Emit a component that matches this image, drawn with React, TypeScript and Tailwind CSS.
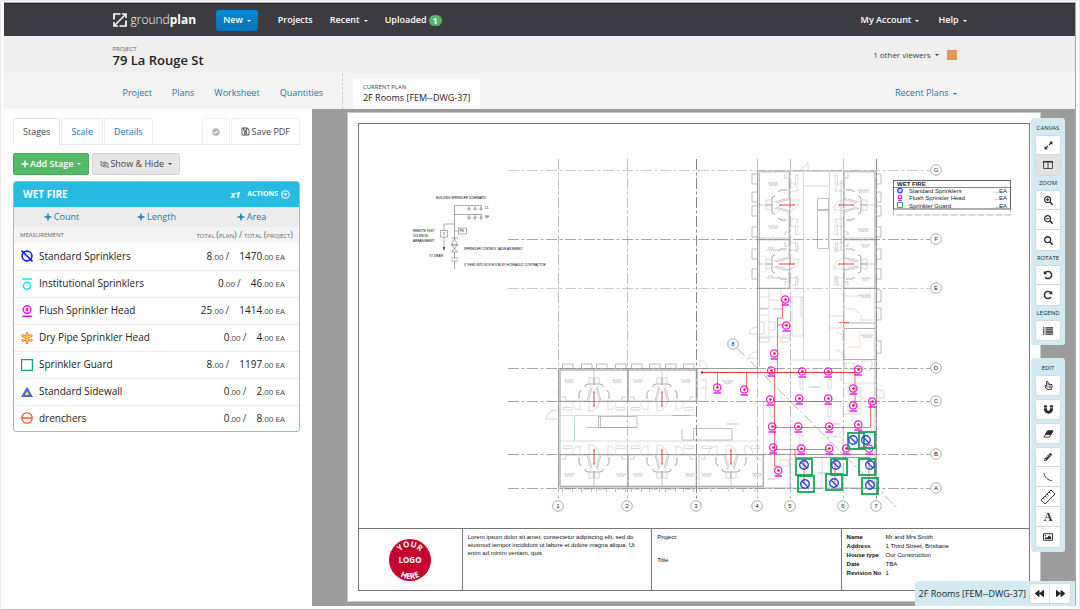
import type { ReactNode } from 'react'
import clsx from 'clsx'
import {
  FaBackward,
  FaCheckCircle,
  FaExpandAlt,
  FaForward,
  FaMagnet,
  FaPencilAlt,
  FaPlus,
  FaRegEyeSlash,
  FaRegHandPointer,
  FaRegImage,
  FaRegSave,
  FaSearch,
  FaSearchMinus,
  FaSearchPlus,
} from 'react-icons/fa'

type SymbolKind = 'standard' | 'institutional' | 'flush' | 'dry' | 'guard' | 'sidewall' | 'drencher'

type Measurement = { kind: SymbolKind; name: string; plan: number; project: number }

const measurements: Measurement[] = [
  { kind: 'standard', name: 'Standard Sprinklers', plan: 8, project: 1470 },
  { kind: 'institutional', name: 'Institutional Sprinklers', plan: 0, project: 46 },
  { kind: 'flush', name: 'Flush Sprinkler Head', plan: 25, project: 1414 },
  { kind: 'dry', name: 'Dry Pipe Sprinkler Head', plan: 0, project: 4 },
  { kind: 'guard', name: 'Sprinkler Guard', plan: 8, project: 1197 },
  { kind: 'sidewall', name: 'Standard Sidewall', plan: 0, project: 2 },
  { kind: 'drencher', name: 'drenchers', plan: 0, project: 8 },
]

const titleRows = [
  ['Name', 'Mr and Mrs Smith'],
  ['Address', '1 Third Street, Brisbane'],
  ['House type', 'Our Construction'],
  ['Date', 'TBA'],
  ['Revision No', '1'],
]

function Caret() {
  return <span aria-hidden className="ml-1 inline-block border-x-2 border-t-2 border-x-transparent align-middle" />
}

function LogoMark() {
  return (
    <svg viewBox="0 0 14 14" className="size-[14px]" fill="none" stroke="#fff" strokeWidth="1.7">
      <path d="M1 6.500V1h6.500M13 7.500V13H6.500" />
      <path d="M2 12 12 2" strokeWidth="1.5" />
      <path d="M9 1h4v4M1 9v4h4" strokeWidth="1.5" />
    </svg>
  )
}

/* ---------- measurement symbols, 12x12 ---------- */

function MeasureSymbol({ kind }: { kind: SymbolKind }) {
  return (
    <svg viewBox="0 0 12 12" className="size-3" fill="none">
      {kind === 'standard' && (
        <g stroke="#0b1ff0" strokeWidth="1.6">
          <circle cx="6" cy="6" r="4.9" />
          <path d="M.5.5l11 11" />
        </g>
      )}
      {kind === 'institutional' && (
        <g stroke="#12e6ee" strokeWidth="1.5">
          <circle cx="6" cy="7.7" r="3.5" />
          <path d="M1.2 1h9.6" />
        </g>
      )}
      {kind === 'flush' && (
        <g stroke="#f312ea" strokeWidth="1.5">
          <circle cx="6" cy="4.6" r="3.8" />
          <circle cx="6" cy="4.6" r=".8" />
          <path d="M1.2 11.2h9.6" />
        </g>
      )}
      {kind === 'dry' && (
        <g strokeLinecap="round">
          <path d="M6 1.500v9M2 3.700l8 4.600M10 3.700 2 8.300" stroke="#f2572f" strokeWidth="3" />
          <path d="M6 1.500v9M2 3.700l8 4.600M10 3.700 2 8.300" stroke="#fbe04a" strokeWidth="1.5" />
        </g>
      )}
      {kind === 'guard' && <rect x="0.6" y="0.6" width="10.8" height="10.8" stroke="#0aa27c" strokeWidth="1.2" />}
      {kind === 'sidewall' && (
        <>
          <path d="M6 .8 12 11H0z" fill="#4f63cf" />
          <path d="M6 5l2.2 4H3.8z" fill="#f0e85a" />
        </>
      )}
      {kind === 'drencher' && (
        <g stroke="#f4563c" strokeWidth="1.3">
          <circle cx="6" cy="6" r="5.2" />
          <path d="M1 6h10" />
        </g>
      )}
    </svg>
  )
}

/* ---------- toolbar drawings ---------- */

const UNDO =
  'M1664 896q0 156-61 298t-164 245-245 164-298 61q-172 0-327-72.5t-264-204.5q-7-10-6.5-22.5t8.5-20.5l137-138q10-9 25-9 16 2 23 12 73 95 179 147t225 52q104 0 198.5-40.5t163.5-109.5 109.5-163.5 40.5-198.5-40.5-198.5-109.5-163.5-163.5-109.5-198.5-40.5q-98 0-188 35.5t-160 101.5l137 138q31 30 14 69-17 40-59 40h-448q-26 0-45-19t-19-45v-448q0-42 40-59 39-17 69 14l130 129q107-101 244.5-156.5t284.5-55.5q156 0 298 61t245 164 164 245 61 298z'

function RotateIcon({ clockwise = false }: { clockwise?: boolean }) {
  return (
    <svg viewBox="0 0 1792 1792" className={clsx('size-[10px]', clockwise && '-scale-x-100')} fill="currentColor">
      <path d={UNDO} />
    </svg>
  )
}

function SplitIcon() {
  return (
    <svg viewBox="0 0 10 8" className="h-2 w-[10px]" fill="none" stroke="currentColor">
      <path d="M.5 1v6.500h9V1M5 1v6.500" strokeWidth=".8" />
      <path d="M0 .8h10" strokeWidth="1.500" />
    </svg>
  )
}

function LegendIcon() {
  return (
    <svg viewBox="0 0 10 8" className="h-2 w-[10px]" stroke="currentColor" strokeWidth="1.300">
      <path d="M0 .800h1.500M2.500 .800H10M0 2.900h1.500M2.500 2.900H10M0 5h1.500M2.500 5H10M0 7.100h1.500M2.500 7.100H10" />
    </svg>
  )
}

function EraserIcon() {
  return (
    <svg viewBox="0 0 12 9" className="h-2 w-[11px]" fill="none" stroke="currentColor" strokeWidth="1">
      <path d="M5 1h6L7 8H1z" />
      <path d="M5 1h6L8.700 5H2.700z" fill="currentColor" />
    </svg>
  )
}

function CurveIcon() {
  return (
    <svg viewBox="0 0 10 10" className="size-[10px]" fill="none" stroke="currentColor">
      <path d="M1 1c.4 4.200 4 7.300 8 7.800" strokeWidth=".9" />
    </svg>
  )
}

function RulerIcon() {
  return (
    <svg viewBox="0 0 16 16" className="size-4" fill="none" stroke="currentColor" strokeWidth=".9">
      <path d="M1 11 11 1l4 4L5 15z" />
      <path d="M3 9l1.500 1.500M5 7l1.500 1.500M7 5l1.500 1.500M9 3l1.500 1.500" />
    </svg>
  )
}

function ActionsIcon() {
  return (
    <svg viewBox="0 0 10 10" className="size-[9px]" fill="none" stroke="#fff" strokeWidth="1.3">
      <circle cx="5" cy="5" r="4.2" />
      <path d="M2.500 3.500h5L5 7.300z" fill="#fff" stroke="none" />
    </svg>
  )
}

type Tool = { label: string; icon: ReactNode; active?: boolean }

function ToolGroup({ tools }: { tools: Tool[] }) {
  return (
    <div className="flex w-[26px] flex-col divide-y divide-[#d6d6d6] overflow-hidden rounded-[3px] border border-[#d3dadc] bg-white">
      {tools.map(tool => (
        <button
          key={tool.label}
          type="button"
          aria-label={tool.label}
          className={clsx('flex h-5 items-center justify-center text-[#2b2b2b] first:h-[19px]', tool.active && 'bg-[#e2e2e2]')}
        >
          {tool.icon}
        </button>
      ))}
    </div>
  )
}

function ToolLabel({ children }: { children: ReactNode }) {
  return <div className="py-[3px] text-[6px] leading-[8px] text-[#222]">{children}</div>
}

/* ---------- floor plan ---------- */

const columns = [
  { x: 558, label: '1' },
  { x: 627, label: '2' },
  { x: 696, label: '3' },
  { x: 757, label: '4' },
  { x: 790, label: '5' },
  { x: 843, label: '6' },
  { x: 876, label: '7' },
]

const levels = [
  { y: 170, label: 'G' },
  { y: 239, label: 'F' },
  { y: 288, label: 'E' },
  { y: 368, label: 'D' },
  { y: 401, label: 'C' },
  { y: 454, label: 'B' },
  { y: 488, label: 'A' },
]

const flushHeads = [
  [785, 299], [786, 325], [774, 353], [717, 387], [744, 389], [771, 370], [802, 371], [828, 371], [858, 369],
  [770, 399], [799, 398], [828, 398], [853, 388], [853, 405], [872, 401], [772, 426], [798, 426], [829, 426],
  [858, 424], [773, 447], [801, 448], [829, 448], [846, 448], [869, 448], [778, 470],
]

const guards = [
  [848, 433], [859, 432], [796, 459], [831, 459], [859, 459], [798, 476], [826, 474], [862, 478],
]

const standardHeads = [
  [853, 440], [866, 440], [804, 465], [836, 465], [870, 465], [805, 484], [834, 483], [870, 485],
]

const windowsX = [562, 581, 596, 615, 631, 649, 665, 683]
const windowsY = [174, 192, 206, 227, 249, 269]

function GridBubble({ x, y, label }: { x: number; y: number; label: string }) {
  return (
    <g>
      <circle cx={x} cy={y} r="5.3" fill="#fff" stroke="#777" strokeWidth=".6" />
      <text x={x} y={y + 2} textAnchor="middle" fontSize="6" fill="#222">
        {label}
      </text>
    </g>
  )
}

// Two mirrored rooms sharing a wall; origin is the corridor wall, y grows into the rooms.
function RoomPair({ transform, half = 34 }: { transform: string; half?: number }) {
  return (
    <g transform={transform} fill="none">
      <g stroke="#999" strokeWidth=".5">
        <path d={`M${-half} 1H-8M8 1H${half}V32H${-half}V1`} />
        <path d="M-7 1-3 16M-5.500 1-2 14M7 1 3 16M5.500 1 2 14M0 17V32" />
        <path d="M-9 15q0 3 3 3H6q3 0 3-3" strokeWidth=".9" />
        <path d="M-5 19v5H-.6V19M5 19v5H.6V19" strokeWidth=".4" />
        <path d="M-15 3v6l2 3M15 3v6l-2 3" strokeWidth=".9" />
        <path d={`M${2 - half} 5h4V2M${half - 2} 5h-4V2`} />
      </g>
      <g stroke="#a8a8a8" strokeWidth=".4">
        <path d="M-5 0V-9A9 9 0 0 1 5 0" />
        <path d="M-14 0V-8A8 8 0 0 0-22 0M14 0V-8A8 8 0 0 1 22 0" />
        <path d={`M${-half + 3}-8h9v2.500h-9zM${half - 12}-8h9v2.500h-9z`} />
      </g>
      <path d="M0-4V10" stroke="#ef2b36" strokeWidth=".9" />
      <path d="M-1-4h2M-1 10h2" stroke="#ef2b36" strokeWidth=".8" />
    </g>
  )
}

function Schematic() {
  return (
    <g>
      <g fill="#000" fontSize="3">
        <text x="436" y="199">BUILDING SPRINKLER SCHEMATIC</text>
        <text x="485" y="209">L1</text>
        <text x="485" y="218">GF</text>
        <text x="413" y="232">REMOTE TEST</text>
        <text x="413" y="237">SOLENOID</text>
        <text x="413" y="242">ARRANGMENT</text>
        <text x="429" y="257">TO DRAIN</text>
        <text x="464" y="250">SPRINKLER CONTROL VALVE ASSEMBLY</text>
        <text x="464" y="266">4" FEED INTO SOV ROOM BY HYDRAULIC CONTRACTOR</text>
        <text x="443" y="235">S</text>
        <text x="460" y="232">FS</text>
      </g>
      <g fill="none" stroke="#555" strokeWidth=".5">
        <path d="M454.500 238V205.500H482M454.500 214.500H482" />
        <path d="M454.500 224H444v6M444 237v13" />
        <path d="M440.500 230.500h7v6.500h-7zM458.500 228h8v6h-8zM454.500 231h4" />
        <path d="M451.500 238h6.500M454.500 238l-3 7h6zM451.500 245l6 7h-6l6-7zM454.500 252v6M451 258h7M451 261h7M454.500 261v8" />
        {[469, 475, 481].map(x => (
          <path key={x} d={`M${x} 206v2m-1 0h2v2h-2zM${x} 215v2m-1 0h2v2h-2z`} />
        ))}
      </g>
      <path d="M443 247h2l-1 4z" fill="#333" />
    </g>
  )
}

function PlanLegend() {
  return (
    <g>
      <path d="M893.500 209v6h117v-6" fill="none" stroke="#999" strokeWidth=".7" strokeDasharray="7 2" />
      <rect x="893.500" y="180.500" width="117" height="28.500" fill="#fff" stroke="#555" strokeWidth=".9" />
      <path d="M893.500 187.500h117" stroke="#555" strokeWidth=".7" />
      <g fontSize="6" fill="#222">
        <text x="897" y="186" fontWeight="bold">WET FIRE</text>
        <text x="909" y="193">Standard Sprinklers</text>
        <text x="909" y="200">Flush Sprinkler Head</text>
        <text x="909" y="208">Sprinkler Guard</text>
        <text x="1007" y="193" textAnchor="end">...EA</text>
        <text x="1007" y="200" textAnchor="end">...EA</text>
        <text x="1007" y="208" textAnchor="end">...EA</text>
      </g>
      <g fill="none">
        <circle cx="900" cy="190.500" r="2.300" stroke="#1f3df0" strokeWidth="1.100" />
        <path d="M898 188.500l4 4" stroke="#1f3df0" strokeWidth=".8" />
        <circle cx="900" cy="197" r="1.900" stroke="#f01be4" strokeWidth="1.200" />
        <path d="M898 200.500h4" stroke="#f01be4" />
        <rect x="897.500" y="202.500" width="5" height="5" stroke="#14a884" strokeWidth=".9" />
      </g>
    </g>
  )
}

function FloorPlan() {
  return (
    <svg
      viewBox="359 124 670 404"
      role="img"
      aria-label="2F Rooms floor plan"
      className="block w-full font-['Liberation_Sans',sans-serif]"
    >
      {/* grid */}
      <g stroke="#8b8b8b" strokeWidth=".7" strokeDasharray="11 2.500 3 2.500">
        {levels.map(({ y, label }) => (
          <path key={label} d={`M508 ${y}.5H930`} stroke={y > 360 || y === 239 ? '#808080' : '#b5b5b5'} />
        ))}
        {columns.map(({ x, label }) => (
          <path key={label} d={`M${x}.5 159V500`} stroke={label === '3' || label === '7' ? '#555' : '#a5a5a5'} />
        ))}
        <path d="M737 348 897 508" strokeWidth=".6" />
      </g>

      {/* outer walls */}
      <g fill="none" stroke="#8f8f8f" strokeWidth=".7">
        <path d="M757.500 368V171h119V488H558.500V368.500H757M560 370H696M560 486.500H763M560 370v116" />
        <path d="M559.500 401.500H697V369M559.500 454.500H876M790 455V488M763.500 455v32M696.500 455v32M628 455v32M628 370v31" />
        <path d="M759.500 173V366M789.500 172V288M844 172V368M875 172V486" strokeWidth=".6" />
        <path d="M757.500 239.500h32M757.500 288.500h32M844 239.500h32M844 288.500h32M844 323h32M844 328.500h32M844 359.500h32" />
      </g>

      {/* windows */}
      <g fill="none" stroke="#8d8d8d" strokeWidth=".6">
        {windowsX.map(x => (
          <path key={x} d={`M${x}.5 368v-4h10.500v4M${x}.5 488v4M${x + 10}.5 488v4M${x + 2} 489h7`} />
        ))}
        {windowsY.map(y => (
          <path key={y} d={`M757 ${y}h-5v10h5M877 ${y}h4v10h-4`} />
        ))}
        <path d="M877 290h4v12h-4M877 341h4v12h-4M877 308h4v12h-4M700 488v4M711 488v4M729 488v4M743 488v4M755 488v4" />
      </g>

      {/* rooms of the west wing */}
      <RoomPair transform="translate(594 402) scale(1 -1)" />
      <RoomPair transform="translate(662 402) scale(1 -1)" />
      <RoomPair transform="translate(594 454)" />
      <RoomPair transform="translate(662 454)" />
      <RoomPair transform="translate(731 454)" half={32} />

      {/* rooms of the north wing */}
      <RoomPair transform="translate(790 205) rotate(90)" half={33} />
      <RoomPair transform="translate(790 264) rotate(90)" half={24} />
      <RoomPair transform="translate(843 205) rotate(-90)" half={33} />
      <RoomPair transform="translate(843 264) rotate(-90)" half={24} />

      {/* corridors, joinery and bathrooms */}
      <g fill="none" stroke="#b4b4b4" strokeWidth=".5">
        <path d="M803.500 172V360M829.500 172V360M790 360h53M803 186h26M829.500 316h14M829.500 328h14" />
        <path d="M792 297h11v39h-11zM801 297v20" />
        <path d="M560 415.500H696M560 441H760M574.500 416V441M763.500 402v52M701 380h5v21M701 388h5" />
        <path d="M757 337h33M759 338h10v4h-10zM781 338h9v4h-9zM769 289v48M759 297h10M759 308h10M769 300h12M781 289v12h8" />
        <path d="M759 322h5v12h-5M770 322h5v8h-5M757 334h-8a8 8 0 0 1 8-7M757 358h-8a8 8 0 0 1 8-6" />
        <path d="M557 419h-11a10 10 0 0 1 11-9M700 368v-8a8 8 0 0 1 7 8M799 171l9-8v8M876 398h8a8 8 0 0 0-2-8h-6" />
        <path d="M844 383h32M861 384v30M844 414h17M846 363h8v6h-8zM862 361h10v9h-10zM848 386h10v7h-10zM848 404h10v8h-10z" />
        <path d="M780 460h9v6h-9zM843 455v33M800 456v6M822 455v33M800 379v10h3v-10zM828 379v10h3v-10zM771 407v10h3v-10zM800 435v10h3v-10zM828 407v10h3v-10z" />
        <path d="M844 296h17M846 309h8l5 4M861 314v6h12M844 332v8a9 9 0 0 0-8-8M844 350v8a9 9 0 0 0-8-8" />
        <path d="M826 437h17v18M826 437l8 8M834 437a12 12 0 0 0 9-11" />
      </g>
      <g fill="none" stroke="#999" strokeWidth=".6">
        <path d="M817.500 198.500h11v50h-11zM817.500 210.500h11M817.500 209.500h11" />
        <path d="M598.500 416.500h38.500V427.500H598.500zM586 427.500h51M600.500 416v11" />
        <path d="M693.500 428.500h38.500v11.500H693.500zM682 429v11h11M690 415.500h-18" />
        <path d="M697 369v32M716 368.500h40M841 371v9h4M841 180v70" strokeWidth=".5" />
      </g>
      <path d="M860 331v16h-13" fill="none" stroke="#f5c48d" strokeWidth=".5" />
      <path d="M759 315h9M574.500 418v22" stroke="#9ee0e4" strokeWidth=".5" />

      {/* room captions, too small to letter */}
      <g stroke="#9c9c9c" strokeWidth=".8" strokeDasharray="1.400 .5">
        <path d="M564 380h10M565 382h8M612 380h10M613 382h8M633 380h10M634 382h8M681 380h10M682 382h8" />
        <path d="M564 474h10M565 476h8M616 474h10M617 476h8M633 474h10M634 476h8M685 474h10M686 476h8M702 474h10M703 476h8M752 474h10M753 476h8" />
        <path d="M768 183h10M769 185h9M768 226h10M769 228h9M768 248h6M767 250h11M768 276h6M767 278h11" />
        <path d="M858 190h11M859 192h9M858 229h11M859 231h9M861 245h9M863 247h5M861 278h9M863 280h5" />
        <path d="M722 381h12M724 383h7M727 424h12M809 387h11M818 473h10M768 479h7M859 295h12M861 297h10M861 335h12M863 337h9M760 309h8M773 309h10M831 424h10" />
      </g>

      {/* pipework */}
      <g fill="none" stroke="#f0323c" strokeWidth=".7">
        <path d="M702 372.500H858" strokeWidth="1.200" />
        <path d="M717.500 372v16M746.500 372v17M774.500 372V466h4M777.500 372V318h5V301M777.500 325H787" />
        <path d="M774 401.500H830M774 427.500H870.500V401M774 449.500H829M795 457.500H870M835 457v28M855 372v33M869 457v27M804 458v26M795 449v8" />
        <path d="M839 322.500h10" />
      </g>
      <g fill="#e0142a">
        <circle cx="702" cy="372.500" r="1.200" />
        {flushHeads.map(([x, y]) => (
          <circle key={`${x}-${y}`} cx={x + 0.5} cy={y + 0.5} r="1.300" />
        ))}
      </g>

      {/* takeoff marks */}
      <g fill="none" stroke="#f01be4" strokeWidth="1.300">
        {flushHeads.map(([x, y]) => (
          <path key={`${x}-${y}`} d={`M${x - 3.5} ${y + 0.5}a3.700 3.700 0 1 0 7.400 0a3.700 3.700 0 1 0-7.400 0M${x - 3.5} ${y + 6}h7.500`} />
        ))}
      </g>
      <g fill="none" stroke="#12a65c" strokeWidth="1.800">
        {guards.map(([x, y]) => (
          <rect key={`${x}-${y}`} x={x} y={y} width="16" height="16" />
        ))}
      </g>
      <g fill="none" stroke="#2545d8" strokeWidth="1.400">
        {standardHeads.map(([x, y]) => (
          <path key={`${x}-${y}`} d={`M${x - 4.3} ${y}a4.300 4.300 0 1 0 8.600 0a4.300 4.300 0 1 0-8.600 0M${x - 3} ${y - 3}l6 6`} />
        ))}
      </g>

      {columns.map(({ x, label }) => (
        <GridBubble key={label} x={x} y={506} label={label} />
      ))}
      {levels.map(({ y, label }) => (
        <GridBubble key={label} x={936} y={y} label={label} />
      ))}
      <GridBubble x={733} y={344} label="8" />

      <Schematic />
      <PlanLegend />
    </svg>
  )
}

function TitleBlock() {
  return (
    <div className="grid h-[62px] grid-cols-[104fr_190fr_190fr_188fr] divide-x divide-[#777] border-t border-[#777] font-['Liberation_Sans',sans-serif] text-[6px] leading-[8px] text-[#111]">
      <div className="flex items-center justify-center">
        <svg viewBox="0 0 44 44" className="size-11 font-['Open_Sans',sans-serif]" fontWeight="bold" fill="#fff">
          <circle cx="22" cy="22" r="21" fill="#c4042d" />
          <path id="logo-top" d="M9 22a13 13 0 0 1 26 0" fill="none" />
          <path id="logo-bottom" d="M3 22a19 19 0 0 0 38 0" fill="none" />
          <g fontSize="8" textAnchor="middle">
            <text>
              <textPath href="#logo-top" startOffset="50%">YOUR</textPath>
            </text>
            <text x="22" y="25">LOGO</text>
            <text>
              <textPath href="#logo-bottom" startOffset="50%">HERE</textPath>
            </text>
          </g>
        </svg>
      </div>
      <p className="py-1 pr-3 pl-[5px]">
        Lorem ipsum dolor sit amet, consectetur adipiscing elit, sed do eiusmod tempor incididunt ut labore et dolore
        magna aliqua. Ut enim ad minim veniam, quis
      </p>
      <div className="flex flex-col gap-[15px] px-[5px] py-1">
        <div>Project:</div>
        <div>Title</div>
      </div>
      <dl className="grid grid-cols-[39px_1fr] content-start px-[5px] py-1 leading-[9px]">
        {titleRows.map(([term, value]) => (
          <div key={term} className="col-span-2 grid grid-cols-subgrid">
            <dt className="font-bold">{term}</dt>
            <dd>{value}</dd>
          </div>
        ))}
      </dl>
    </div>
  )
}

/* ---------- page parts ---------- */

function TopBar() {
  return (
    <header className="border-t border-[#26262a] bg-[#3c3b41] text-white">
      <div className="mx-auto flex h-8 max-w-[854px] items-center text-[9px] font-semibold">
        <a href="#home" className="flex items-center gap-1 text-[12px] leading-none font-light">
          <LogoMark />
          <span>
            ground<span className="font-bold">plan</span>
          </span>
        </a>
        <button
          type="button"
          className="ml-5 h-[21px] rounded-[3px] bg-linear-to-b from-[#0a8bd0] to-[#0571b5] px-[7px] text-[9px] font-semibold"
        >
          New
          <Caret />
        </button>
        <nav className="ml-5 flex items-center gap-[17px]">
          <a href="#projects">Projects</a>
          <a href="#recent">
            Recent
            <Caret />
          </a>
          <a href="#uploaded" className="flex items-center gap-[2px]">
            Uploaded
            <span className="rounded-full bg-[#53b567] px-1 text-[9px] leading-[11px] font-bold">1</span>
          </a>
        </nav>
        <nav className="ml-auto flex items-center gap-[19px]">
          <a href="#account">
            My Account
            <Caret />
          </a>
          <a href="#help">
            Help
            <Caret />
          </a>
        </nav>
      </div>
    </header>
  )
}

function ProjectBar() {
  return (
    <>
      <div className="bg-[#efefef]">
        <div className="mx-auto flex h-[37px] max-w-[854px] items-center justify-between">
          <div className="pt-[3px]">
            <div className="text-[6px] leading-[8px] text-[#666]">PROJECT</div>
            <h1 className="text-[13px] leading-[14px] font-semibold text-[#222]">79 La Rouge St</h1>
          </div>
          <div className="flex items-center gap-2 pr-[10px]">
            <button type="button" className="text-[8px] text-[#444]">
              1 other viewers
              <Caret />
            </button>
            <span className="size-[10px] bg-[#ea935d]" />
          </div>
        </div>
      </div>
      <div className="bg-[#f4f4f4]">
        <div className="mx-auto flex h-9 max-w-[854px] items-center px-[10px] pt-1 text-[9px] font-medium text-[#1279b0]">
          <nav className="flex gap-5">
            <a href="#project">Project</a>
            <a href="#plans">Plans</a>
            <a href="#worksheet">Worksheet</a>
            <a href="#quantities">Quantities</a>
          </nav>
          <div className="-mt-1 ml-[19px] flex h-9 items-end border-l border-dashed border-[#ccc] pb-px pl-[10px]">
            <div className="rounded-t-[2px] bg-white px-[10px] py-1 font-normal text-[#222]">
              <div className="text-[6px] leading-[8px] text-[#444]">CURRENT PLAN</div>
              <div className="text-[9px] leading-[13px]">2F Rooms [FEM--DWG-37]</div>
            </div>
          </div>
          <a href="#recent-plans" className="ml-auto">
            Recent Plans
            <Caret />
          </a>
        </div>
      </div>
    </>
  )
}

function Amount({ value }: { value: number }) {
  return (
    <>
      <span className="text-[10px] text-[#222]">{value}</span>
      .00
    </>
  )
}

function Sidebar() {
  return (
    <aside className="w-[308px] shrink-0 bg-white pt-[9px] pr-[12px] pb-4 pl-[9px]">
      <div className="flex h-[27px] items-stretch border-b border-[#e4e4e4] text-[9px]">
        <button type="button" className="-mb-px rounded-t-[3px] border border-b-0 border-[#e4e4e4] bg-white px-[9px] text-[#444]">
          Stages
        </button>
        <button type="button" className="ml-px rounded-t-[3px] border border-b-0 border-[#ececec] px-[9px] font-medium text-[#1279b0]">
          Scale
        </button>
        <button type="button" className="ml-px rounded-t-[3px] border border-b-0 border-[#ececec] px-[9px] font-medium text-[#1279b0]">
          Details
        </button>
        <button
          type="button"
          aria-label="Approve"
          className="ml-auto rounded-t-[3px] border border-b-0 border-[#f0f0f0] px-[9px] text-[#b5b5b5]"
        >
          <FaCheckCircle size={8} />
        </button>
        <button type="button" className="ml-px flex items-center gap-[2px] rounded-t-[3px] border border-b-0 border-[#f0f0f0] px-[9px] text-[#444]">
          <FaRegSave size={9} />
          Save PDF
        </button>
      </div>

      <div className="mt-2 flex gap-[3px] text-[9px]">
        <button type="button" className="flex h-[22px] items-center rounded-[2px] border border-[#4aa85e] bg-[#55b96a] px-[7px] font-semibold text-white">
          <FaPlus size={8} className="mr-px" />
          Add Stage
          <Caret />
        </button>
        <button type="button" className="flex h-[22px] items-center rounded-[2px] border border-[#d2d2d2] bg-[#e6e6e6] px-[7px] text-[#444]">
          <FaRegEyeSlash size={9} className="mr-px" />
          Show &amp; Hide
          <Caret />
        </button>
      </div>

      <section className="mt-[6px] overflow-hidden rounded-[3px] border border-[#6fcdea]">
        <div className="flex h-[25px] items-center bg-[#27bae2] px-[9px] text-white">
          <h2 className="text-[10px] font-bold">WET FIRE</h2>
          <span className="ml-auto text-[9px] font-bold italic">x1</span>
          <button type="button" className="ml-[7px] flex items-center gap-[3px] text-[7px] font-bold">
            ACTIONS
            <ActionsIcon />
          </button>
        </div>
        <div className="grid h-5 grid-cols-3 bg-[#ececec] text-[9px] font-medium text-[#1279b0]">
          {['Count', 'Length', 'Area'].map(name => (
            <button key={name} type="button" className="flex items-center justify-center gap-[2px]">
              <FaPlus size={8} />
              {name}
            </button>
          ))}
        </div>
        <table className="w-full text-[#222]">
          <thead className="bg-[#f4f4f4] text-[6px] text-[#666]">
            <tr className="h-4">
              <th colSpan={2} scope="col" className="pl-[6px] text-left font-normal">
                MEASUREMENT
              </th>
              <th scope="col" className="pr-[6px] text-right font-normal">
                TOTAL <span className="text-[9px]">(</span>PLAN<span className="text-[9px]">) /</span> TOTAL{' '}
                <span className="text-[9px]">(</span>PROJECT<span className="text-[9px]">)</span>
              </th>
            </tr>
          </thead>
          <tbody>
            {measurements.map(item => (
              <tr key={item.name} className="h-[27px] border-b border-[#ececec] last:h-[26px] last:border-b-0">
                <td className="w-[25px] pl-[7px]">
                  <MeasureSymbol kind={item.kind} />
                </td>
                <td className="text-[10px]">{item.name}</td>
                <td className="pr-[14px] text-right text-[8px] text-[#444]">
                  <span className="mr-[10px]">
                    <Amount value={item.plan} /> <span className="text-[10px]">/</span>
                  </span>
                  <Amount value={item.project} /> EA
                </td>
              </tr>
            ))}
          </tbody>
        </table>
      </section>
    </aside>
  )
}

function CanvasTools() {
  return (
    <div className="absolute top-[9px] right-[10px] flex flex-col gap-[13px]">
      <div className="flex flex-col items-center rounded-[3px] bg-[#d2ebf3] px-1 pt-[3px] pb-1">
        <ToolLabel>CANVAS</ToolLabel>
        <ToolGroup
          tools={[
            { label: 'Expand', icon: <FaExpandAlt size={9} /> },
            { label: 'Split view', icon: <SplitIcon />, active: true },
          ]}
        />
        <ToolLabel>ZOOM</ToolLabel>
        <ToolGroup
          tools={[
            { label: 'Zoom in', icon: <FaSearchPlus size={9} /> },
            { label: 'Zoom out', icon: <FaSearchMinus size={9} /> },
            { label: 'Zoom to fit', icon: <FaSearch size={9} /> },
          ]}
        />
        <ToolLabel>ROTATE</ToolLabel>
        <ToolGroup
          tools={[
            { label: 'Rotate left', icon: <RotateIcon /> },
            { label: 'Rotate right', icon: <RotateIcon clockwise /> },
          ]}
        />
        <ToolLabel>LEGEND</ToolLabel>
        <ToolGroup tools={[{ label: 'Legend', icon: <LegendIcon /> }]} />
      </div>
      <div className="flex flex-col items-center rounded-[3px] bg-[#d2ebf3] px-1 pt-[3px] pb-1">
        <ToolLabel>EDIT</ToolLabel>
        <div className="flex flex-col gap-[3px]">
          <ToolGroup tools={[{ label: 'Select', icon: <FaRegHandPointer size={9} /> }]} />
          <ToolGroup tools={[{ label: 'Snap', icon: <FaMagnet size={9} /> }]} />
          <ToolGroup tools={[{ label: 'Erase', icon: <EraserIcon /> }]} />
          <ToolGroup
            tools={[
              { label: 'Draw', icon: <FaPencilAlt size={8} /> },
              { label: 'Curve', icon: <CurveIcon /> },
              { label: 'Measure', icon: <RulerIcon /> },
              {
                label: 'Text',
                icon: <span className="font-['Liberation_Serif',serif] text-[12px] leading-none font-bold">A</span>,
              },
              { label: 'Image', icon: <FaRegImage size={10} /> },
            ]}
          />
        </div>
      </div>
    </div>
  )
}

function PlanPager() {
  return (
    <div className="absolute right-0 bottom-0 flex items-center gap-[3px] rounded-tl-[3px] bg-[#d2ebf3] py-[2px] pr-1 pl-1 text-[9px] text-[#222]">
      2F Rooms [FEM--DWG-37]
      <div className="flex divide-x divide-[#ddd] rounded-[3px] border border-[#d3dadc] bg-white">
        <button type="button" aria-label="Previous plan" className="flex h-[19px] w-5 items-center justify-center">
          <FaBackward size={9} />
        </button>
        <button type="button" aria-label="Next plan" className="flex h-[19px] w-5 items-center justify-center">
          <FaForward size={9} />
        </button>
      </div>
    </div>
  )
}

export default function App() {
  return (
    <div className="flex min-h-screen flex-col border border-[#e9e9e9] border-b-[#c4c4c4] bg-white pt-px pr-[3px] pb-[3px] pl-[3px] font-['Open_Sans','Noto_Sans',sans-serif]">
      <div className="flex flex-1 flex-col border-t border-r border-[#a9a9a9]">
        <TopBar />
        <ProjectBar />
        <div className="flex flex-1 items-stretch">
          <Sidebar />
          <main className="relative flex-1 bg-[#9c9c9c] pt-[3px] pr-[34px] pb-1 pl-[35px]">
            <div className="border border-[#c8c8c8] bg-white p-[10px]">
              <div className="border border-[#777]">
                <FloorPlan />
                <TitleBlock />
              </div>
            </div>
            <CanvasTools />
            <PlanPager />
          </main>
        </div>
      </div>
    </div>
  )
}
